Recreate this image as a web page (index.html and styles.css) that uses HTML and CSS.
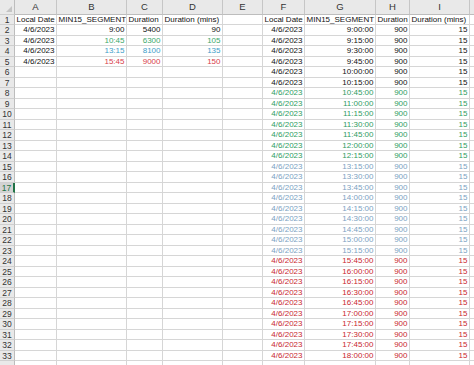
FILE: index.html
```html
<!DOCTYPE html>
<html>
<head>
<meta charset="utf-8">
<link rel="stylesheet" href="styles.css">
</head>
<body>
<div class="sheet">
  <div class="row colhead">
    <i class="corner"></i><b>A</b><b>B</b><b>C</b><b>D</b><b>E</b><b>F</b><b>G</b><b>H</b><b>I</b><b></b>
  </div>
  <div class="row">
    <i>1</i><span>Local Date</span><span>MIN15_SEGMENT</span><span>Duration</span><span>Duration (mins)</span><span></span><span>Local Date</span><span>MIN15_SEGMENT</span><span>Duration</span><span>Duration (mins)</span><span></span>
  </div>
  <div class="row">
    <i>2</i><span class="n">4/6/2023</span><span class="n">9:00</span><span class="n">5400</span><span class="n">90</span><span></span><span class="n">4/6/2023</span><span class="n">9:00:00</span><span class="n">900</span><span class="n">15</span><span></span>
  </div>
  <div class="row">
    <i>3</i><span class="n">4/6/2023</span><span class="n lg">10:45</span><span class="n lg">6300</span><span class="n lg">105</span><span></span><span class="n">4/6/2023</span><span class="n">9:15:00</span><span class="n">900</span><span class="n">15</span><span></span>
  </div>
  <div class="row">
    <i>4</i><span class="n">4/6/2023</span><span class="n lb">13:15</span><span class="n lb">8100</span><span class="n lb">135</span><span></span><span class="n">4/6/2023</span><span class="n">9:30:00</span><span class="n">900</span><span class="n">15</span><span></span>
  </div>
  <div class="row">
    <i>5</i><span class="n">4/6/2023</span><span class="n lr">15:45</span><span class="n lr">9000</span><span class="n lr">150</span><span></span><span class="n">4/6/2023</span><span class="n">9:45:00</span><span class="n">900</span><span class="n">15</span><span></span>
  </div>
  <div class="row">
    <i>6</i><span></span><span></span><span></span><span></span><span></span><span class="n">4/6/2023</span><span class="n">10:00:00</span><span class="n">900</span><span class="n">15</span><span></span>
  </div>
  <div class="row">
    <i>7</i><span></span><span></span><span></span><span></span><span></span><span class="n">4/6/2023</span><span class="n">10:15:00</span><span class="n">900</span><span class="n">15</span><span></span>
  </div>
  <div class="row g">
    <i>8</i><span></span><span></span><span></span><span></span><span></span><span class="n">4/6/2023</span><span class="n">10:45:00</span><span class="n">900</span><span class="n">15</span><span></span>
  </div>
  <div class="row g">
    <i>9</i><span></span><span></span><span></span><span></span><span></span><span class="n">4/6/2023</span><span class="n">11:00:00</span><span class="n">900</span><span class="n">15</span><span></span>
  </div>
  <div class="row g">
    <i>10</i><span></span><span></span><span></span><span></span><span></span><span class="n">4/6/2023</span><span class="n">11:15:00</span><span class="n">900</span><span class="n">15</span><span></span>
  </div>
  <div class="row g">
    <i>11</i><span></span><span></span><span></span><span></span><span></span><span class="n">4/6/2023</span><span class="n">11:30:00</span><span class="n">900</span><span class="n">15</span><span></span>
  </div>
  <div class="row g">
    <i>12</i><span></span><span></span><span></span><span></span><span></span><span class="n">4/6/2023</span><span class="n">11:45:00</span><span class="n">900</span><span class="n">15</span><span></span>
  </div>
  <div class="row g">
    <i>13</i><span></span><span></span><span></span><span></span><span></span><span class="n">4/6/2023</span><span class="n">12:00:00</span><span class="n">900</span><span class="n">15</span><span></span>
  </div>
  <div class="row g">
    <i>14</i><span></span><span></span><span></span><span></span><span></span><span class="n">4/6/2023</span><span class="n">12:15:00</span><span class="n">900</span><span class="n">15</span><span></span>
  </div>
  <div class="row b">
    <i>15</i><span></span><span></span><span></span><span></span><span></span><span class="n">4/6/2023</span><span class="n">13:15:00</span><span class="n">900</span><span class="n">15</span><span></span>
  </div>
  <div class="row b">
    <i>16</i><span></span><span></span><span></span><span></span><span></span><span class="n">4/6/2023</span><span class="n">13:30:00</span><span class="n">900</span><span class="n">15</span><span></span>
  </div>
  <div class="row b">
    <i class="sel">17</i><span></span><span></span><span></span><span></span><span></span><span class="n">4/6/2023</span><span class="n">13:45:00</span><span class="n">900</span><span class="n">15</span><span></span>
  </div>
  <div class="row b">
    <i>18</i><span></span><span></span><span></span><span></span><span></span><span class="n">4/6/2023</span><span class="n">14:00:00</span><span class="n">900</span><span class="n">15</span><span></span>
  </div>
  <div class="row b">
    <i>19</i><span></span><span></span><span></span><span></span><span></span><span class="n">4/6/2023</span><span class="n">14:15:00</span><span class="n">900</span><span class="n">15</span><span></span>
  </div>
  <div class="row b">
    <i>20</i><span></span><span></span><span></span><span></span><span></span><span class="n">4/6/2023</span><span class="n">14:30:00</span><span class="n">900</span><span class="n">15</span><span></span>
  </div>
  <div class="row b">
    <i>21</i><span></span><span></span><span></span><span></span><span></span><span class="n">4/6/2023</span><span class="n">14:45:00</span><span class="n">900</span><span class="n">15</span><span></span>
  </div>
  <div class="row b">
    <i>22</i><span></span><span></span><span></span><span></span><span></span><span class="n">4/6/2023</span><span class="n">15:00:00</span><span class="n">900</span><span class="n">15</span><span></span>
  </div>
  <div class="row b">
    <i>23</i><span></span><span></span><span></span><span></span><span></span><span class="n">4/6/2023</span><span class="n">15:15:00</span><span class="n">900</span><span class="n">15</span><span></span>
  </div>
  <div class="row r">
    <i>24</i><span></span><span></span><span></span><span></span><span></span><span class="n">4/6/2023</span><span class="n">15:45:00</span><span class="n">900</span><span class="n">15</span><span></span>
  </div>
  <div class="row r">
    <i>25</i><span></span><span></span><span></span><span></span><span></span><span class="n">4/6/2023</span><span class="n">16:00:00</span><span class="n">900</span><span class="n">15</span><span></span>
  </div>
  <div class="row r">
    <i>26</i><span></span><span></span><span></span><span></span><span></span><span class="n">4/6/2023</span><span class="n">16:15:00</span><span class="n">900</span><span class="n">15</span><span></span>
  </div>
  <div class="row r">
    <i>27</i><span></span><span></span><span></span><span></span><span></span><span class="n">4/6/2023</span><span class="n">16:30:00</span><span class="n">900</span><span class="n">15</span><span></span>
  </div>
  <div class="row r">
    <i>28</i><span></span><span></span><span></span><span></span><span></span><span class="n">4/6/2023</span><span class="n">16:45:00</span><span class="n">900</span><span class="n">15</span><span></span>
  </div>
  <div class="row r">
    <i>29</i><span></span><span></span><span></span><span></span><span></span><span class="n">4/6/2023</span><span class="n">17:00:00</span><span class="n">900</span><span class="n">15</span><span></span>
  </div>
  <div class="row r">
    <i>30</i><span></span><span></span><span></span><span></span><span></span><span class="n">4/6/2023</span><span class="n">17:15:00</span><span class="n">900</span><span class="n">15</span><span></span>
  </div>
  <div class="row r">
    <i>31</i><span></span><span></span><span></span><span></span><span></span><span class="n">4/6/2023</span><span class="n">17:30:00</span><span class="n">900</span><span class="n">15</span><span></span>
  </div>
  <div class="row r">
    <i>32</i><span></span><span></span><span></span><span></span><span></span><span class="n">4/6/2023</span><span class="n">17:45:00</span><span class="n">900</span><span class="n">15</span><span></span>
  </div>
  <div class="row r">
    <i>33</i><span></span><span></span><span></span><span></span><span></span><span class="n">4/6/2023</span><span class="n">18:00:00</span><span class="n">900</span><span class="n">15</span><span></span>
  </div>
  <div class="row">
    <i></i><span></span><span></span><span></span><span></span><span></span><span></span><span></span><span></span><span></span><span></span>
  </div>
</div>
</body>
</html>
```

FILE: styles.css
```css
html, body {
  margin: 0;
  padding: 0;
  background: #ffffff;
  overflow: hidden;
}

.sheet {
  width: 474px;
  height: 365px;
  overflow: hidden;
  font-family: "Liberation Sans", Arial, sans-serif;
  font-size: 8px;
  color: #111;
}

.row {
  display: grid;
  grid-template-columns: 15px 42px 70px 36px 60px 40px 42px 71px 34px 60px 14px;
  height: 10.5px;
}

.row > * {
  box-sizing: border-box;
  border-right: 1px solid #d6d6d6;
  border-bottom: 1px solid #d6d6d6;
  font-style: normal;
  font-weight: normal;
  line-height: 10.5px;
  white-space: nowrap;
  overflow: hidden;
  padding: 0 1.5px;
}

.row > i {
  background: #e9e9e9;
  border-right-color: #bdbdbd;
  border-bottom-color: #cfcfcf;
  text-align: center;
  color: #333;
  font-size: 8.5px;
  padding: 0;
}

.row > i.sel {
  background: #d3d3d3;
  color: #217346;
  border-right: 2px solid #217346;
}

.colhead {
  height: 14.5px;
}

.colhead > * {
  background: #e9e9e9;
  border-right-color: #c6c6c6;
  border-bottom-color: #bdbdbd;
  text-align: center;
  line-height: 14px;
  font-size: 9.5px;
  color: #333;
}

.colhead > i.corner {
  position: relative;
}

.colhead > i.corner::after {
  content: "";
  position: absolute;
  right: 2px;
  bottom: 2px;
  width: 0;
  height: 0;
  border-left: 6px solid transparent;
  border-bottom: 6px solid #c4c4c4;
}

.n {
  text-align: right;
}

.lg { color: #3aa86a; }
.lb { color: #3c9ec9; }
.lr { color: #d8404a; }

.g > span.n { color: #2f9d5f; }
.b > span.n { color: #7ba2c2; }
.r > span.n { color: #c9272f; }
```
